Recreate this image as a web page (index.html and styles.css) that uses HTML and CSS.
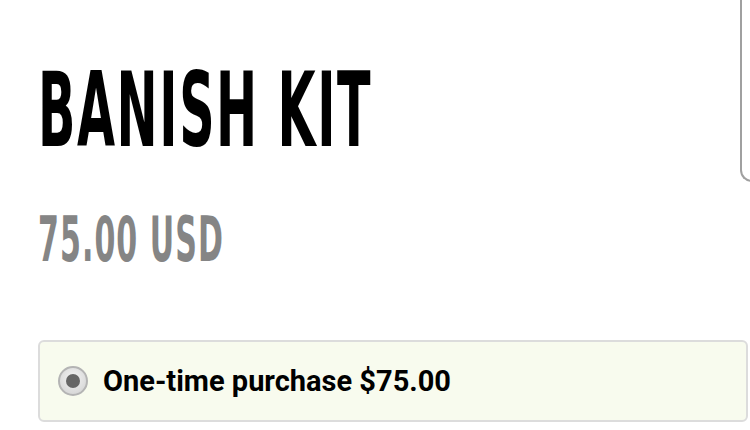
FILE: index.html
```html
<!DOCTYPE html>
<html>
<head>
<meta charset="utf-8">
<link rel="stylesheet" href="styles.css">
</head>
<body>
<div class="page">
  <div class="side-panel"></div>
  <h1 class="title"><span class="title-text">BANISH KIT</span></h1>
  <div class="price"><span class="price-text">75.00 USD</span></div>
  <label class="option">
    <span class="radio"><span class="radio-dot"></span></span>
    <span class="option-text">One-time purchase $75.00</span>
  </label>
</div>
</body>
</html>
```

FILE: styles.css
```css
html, body {
  margin: 0;
  padding: 0;
  background: #ffffff;
}
.page {
  position: relative;
  width: 750px;
  height: 430px;
  overflow: hidden;
  padding: 0 0 0 38px;
  box-sizing: border-box;
}
.side-panel {
  position: absolute;
  left: 740px;
  top: -10px;
  width: 40px;
  height: 192px;
  border-left: 2px solid #a0a0a0;
  border-bottom: 2px solid #a0a0a0;
  border-bottom-left-radius: 12px;
  box-sizing: border-box;
}
.title {
  margin: 0;
  padding-top: 50px;
  height: 120px;
  font-family: "DejaVu Sans", sans-serif;
  font-stretch: condensed;
  font-weight: bold;
  font-size: 103px;
  line-height: 120px;
  color: #000;
  white-space: nowrap;
}
.title-text {
  display: inline-block;
  letter-spacing: 3px;
  transform: scaleX(0.53);
  transform-origin: left center;
}
.price {
  margin-top: 40px;
  height: 60px;
  font-family: "DejaVu Sans", sans-serif;
  font-stretch: condensed;
  font-weight: bold;
  font-size: 63px;
  line-height: 60px;
  color: #858585;
  white-space: nowrap;
}
.price-text {
  display: inline-block;
  letter-spacing: 2px;
  transform: scaleX(0.53);
  transform-origin: left center;
}
.option {
  margin-top: 70px;
  width: 710px;
  height: 82px;
  box-sizing: border-box;
  background: #f8fbee;
  border: 2px solid #dcdcdc;
  border-radius: 6px;
  display: flex;
  align-items: center;
  padding-left: 18px;
  gap: 15px;
}
.radio {
  width: 30px;
  height: 30px;
  border-radius: 50%;
  box-sizing: border-box;
  border: 2px solid #b4b4b4;
  background: radial-gradient(circle at 50% 40%, #f4f4f4, #cfcfcf);
  display: flex;
  align-items: center;
  justify-content: center;
}
.radio-dot {
  width: 14px;
  height: 14px;
  border-radius: 50%;
  background: #666666;
}
.option-text {
  font-family: Roboto, "Liberation Sans", sans-serif;
  font-weight: bold;
  font-size: 29px;
  color: #000;
}
```
